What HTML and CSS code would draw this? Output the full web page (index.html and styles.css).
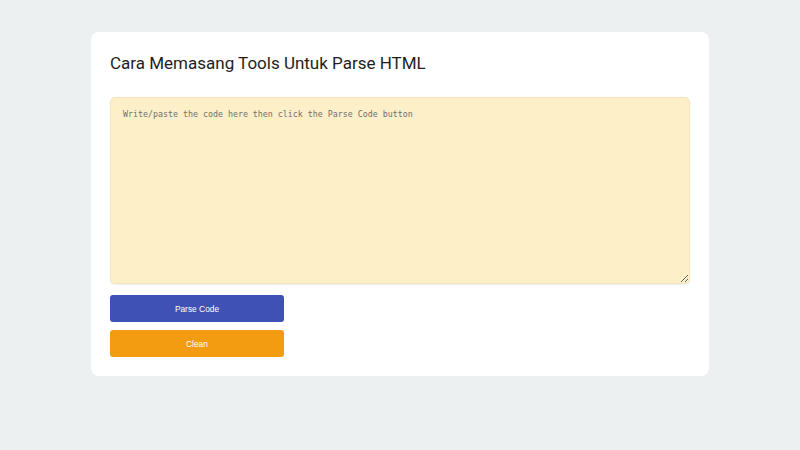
FILE: index.html
```html
<!DOCTYPE html>
<html lang="id">
<head>
<meta charset="utf-8">
<title>Parse HTML</title>
<link rel="stylesheet" href="styles.css">
</head>
<body>
<main class="card">
  <h1 class="title">Cara Memasang Tools Untuk Parse HTML</h1>
  <textarea class="code" placeholder="Write/paste the code here then click the Parse Code button"></textarea>
  <div class="actions">
    <button class="btn btn-parse">Parse Code</button>
    <button class="btn btn-clean">Clean</button>
  </div>
</main>
</body>
</html>
```
FILE: styles.css
```css
html, body {
  margin: 0;
  padding: 0;
  background: #ecf0f1;
  font-family: Roboto, "Liberation Sans", sans-serif;
}
body {
  padding-top: 32px;
}
.card {
  box-sizing: border-box;
  width: 618px;
  margin: 0 auto;
  background: #fff;
  border-radius: 8px;
  padding: 19px 19px 19px;
}
.title {
  margin: 1px 0 23px;
  font-size: 17px;
  font-weight: 400;
  color: #1e1e1e;
  line-height: 22px;
}
.code {
  display: block;
  box-sizing: border-box;
  width: 100%;
  height: 187px;
  margin: 0;
  padding: 11px 12px;
  background: #fdf0c9;
  border: 1px solid #f5e6bd;
  border-radius: 5px;
  box-shadow: 0 1px 2px rgba(0,0,0,0.08);
  font-family: "DejaVu Sans Mono", monospace;
  font-size: 8.3px;
  color: #333;
  resize: vertical;
}
.code::placeholder {
  color: #6f6f6f;
}
.actions {
  display: flex;
  flex-direction: column;
  gap: 8px;
  margin-top: 11px;
}
.btn {
  width: 174px;
  height: 27px;
  border: 0;
  border-radius: 3px;
  color: #fff;
  font-family: "Liberation Sans", Arial, sans-serif;
  font-size: 8.4px;
  cursor: pointer;
}
.btn-parse {
  background: #3f51b5;
}
.btn-clean {
  background: #f39c12;
}
```
